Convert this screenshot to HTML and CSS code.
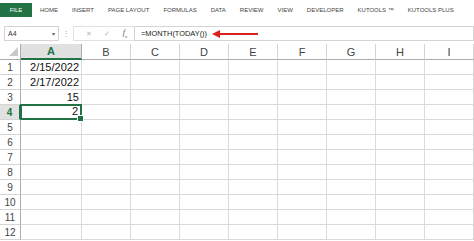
FILE: index.html
```html
<!DOCTYPE html>
<html lang="en">
  <head>
    <meta charset="UTF-8" />
    <title>Excel - MONTH(TODAY())</title>
    <link rel="stylesheet" href="styles.css">
  </head>
  <body>
    <!-- Ribbon tabs -->
    <nav class="ribbon">
      <span class="tab tab-file">FILE</span>
      <span class="tab">HOME</span>
      <span class="tab">INSERT</span>
      <span class="tab">PAGE LAYOUT</span>
      <span class="tab">FORMULAS</span>
      <span class="tab">DATA</span>
      <span class="tab">REVIEW</span>
      <span class="tab">VIEW</span>
      <span class="tab">DEVELOPER</span>
      <span class="tab">KUTOOLS &trade;</span>
      <span class="tab">KUTOOLS PLUS</span>
    </nav>

    <!-- Formula bar -->
    <div class="formula-bar">
      <div class="name-box">
        <span>A4</span>
        <span class="caret">&#9662;</span>
      </div>
      <div class="grip">&#8942;</div>
      <div class="fx-buttons">
        <span class="fx-btn">&#10005;</span>
        <span class="fx-btn">&#10003;</span>
        <span class="fx-btn fx">f<sub>x</sub></span>
      </div>
      <div class="formula-input">
        <span>=MONTH(TODAY())</span>
        <svg class="arrow" width="46" height="8" viewBox="0 0 46 8">
          <line x1="5" y1="4" x2="46" y2="4" stroke="#d9201f" stroke-width="2" />
          <polygon points="0,4 8,0 8,8" fill="#d9201f" />
        </svg>
      </div>
    </div>

    <!-- Sheet -->
    <div class="sheet" id="sheet"></div>

    <script>
      const sheet = document.getElementById("sheet");
      const columns = ["A", "B", "C", "D", "E", "F", "G", "H", "I"];
      const values = { 1: "2/15/2022", 2: "2/17/2022", 3: "15", 4: "2" };

      // corner
      const corner = document.createElement("div");
      corner.className = "corner";
      corner.innerHTML =
        '<svg width="9" height="9" viewBox="0 0 9 9"><polygon points="9,0 9,9 0,9" fill="#c9c9c9"/></svg>';
      sheet.appendChild(corner);

      columns.forEach((col) => {
        const head = document.createElement("div");
        head.className = col === "A" ? "col-head active" : "col-head";
        head.textContent = col;
        sheet.appendChild(head);
      });

      for (let row = 1; row <= 12; row++) {
        const head = document.createElement("div");
        head.className = row === 4 ? "row-head active" : "row-head";
        head.textContent = row;
        sheet.appendChild(head);

        columns.forEach((col) => {
          const cell = document.createElement("div");
          cell.className = "cell";
          if (col === "A") {
            cell.textContent = values[row] || "";
            if (row === 4) cell.classList.add("selected");
          }
          sheet.appendChild(cell);
        });
      }
    </script>
  </body>
</html>
```

FILE: styles.css
```css
* {
  box-sizing: border-box;
}
body {
  margin: 0;
  width: 474px;
  height: 241px;
  overflow: hidden;
  background: #fff;
  font-family: "Liberation Sans", Arial, sans-serif;
  color: #222;
}
.ribbon {
  display: flex;
  padding-top: 3px;
  height: 17px;
}
.tab {
  padding: 0 7px;
  height: 14px;
  line-height: 14px;
  font-size: 6px;
  color: #444;
  white-space: nowrap;
}
.tab-file {
  width: 32px;
  padding: 0;
  margin-right: 1px;
  text-align: center;
  background: #217346;
  color: #fff;
}
.formula-bar {
  display: flex;
  align-items: stretch;
  margin-top: 9px;
  height: 15px;
}
.name-box {
  display: flex;
  align-items: center;
  justify-content: space-between;
  width: 55px;
  margin-left: 4px;
  padding: 0 3px;
  border: 1px solid #d4d4d4;
  font-size: 7px;
  color: #333;
}
.caret {
  font-size: 6px;
  color: #666;
}
.grip {
  width: 14px;
  text-align: center;
  line-height: 15px;
  font-size: 8px;
  color: #aaa;
}
.fx-buttons {
  display: flex;
  align-items: center;
  width: 61px;
  padding-left: 6px;
  border: 1px solid #e1e1e1;
  border-right: none;
}
.fx-btn {
  width: 19px;
  text-align: center;
  font-size: 7px;
  color: #b5b5b5;
}
.fx {
  font-family: "Liberation Serif", serif;
  font-style: italic;
  font-size: 8px;
  color: #555;
}
.fx sub {
  font-size: 5px;
}
.formula-input {
  flex: 1;
  display: flex;
  align-items: center;
  padding-left: 6px;
  border: 1px solid #d4d4d4;
  font-size: 7.4px;
  color: #222;
}
.arrow {
  margin-left: 5px;
}
.sheet {
  display: grid;
  grid-template-columns: 21px 61px repeat(8, 49px);
  grid-template-rows: 16px repeat(12, 15px);
  margin-top: 3px;
}
.corner {
  display: flex;
  align-items: flex-end;
  justify-content: flex-end;
  padding: 0 2px 3px 0;
  border-right: 1px solid #ababab;
  border-bottom: 1px solid #ababab;
}
.col-head {
  display: flex;
  align-items: center;
  justify-content: center;
  font-size: 11px;
  color: #444;
  border-right: 1px solid #d4d4d4;
  border-bottom: 1px solid #ababab;
}
.col-head.active {
  background: #e1e1e1;
  color: #217346;
  font-weight: bold;
  border-right-color: #ababab;
  border-bottom: 2px solid #217346;
}
.row-head {
  display: flex;
  align-items: center;
  justify-content: center;
  font-size: 10px;
  color: #444;
  border-right: 1px solid #ababab;
  border-bottom: 1px solid #d4d4d4;
}
.row-head.active {
  background: #e1e1e1;
  color: #217346;
  font-weight: bold;
  border-right: 2px solid #217346;
}
.cell {
  display: flex;
  align-items: flex-end;
  justify-content: flex-end;
  padding: 0 2px 1px 0;
  font-size: 11px;
  color: #111;
  border-right: 1px solid #dadada;
  border-bottom: 1px solid #dadada;
}
.cell.selected {
  position: relative;
  border: 2px solid #217346;
  margin: -1px 0 0 -1px;
}
.cell.selected::after {
  content: "";
  position: absolute;
  right: -4px;
  bottom: -4px;
  width: 5px;
  height: 5px;
  background: #217346;
  border: 1px solid #fff;
}
```
